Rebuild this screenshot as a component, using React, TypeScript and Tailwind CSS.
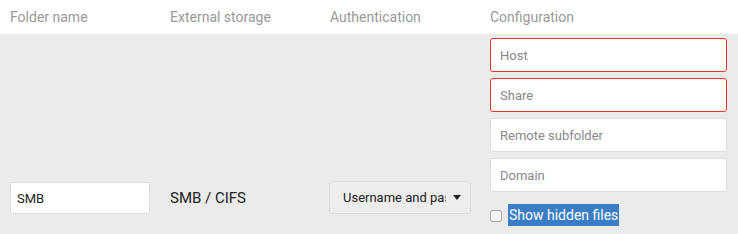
export default function App() {
  const configFields = [
    { label: "Host", invalid: true },
    { label: "Share", invalid: true },
    { label: "Remote subfolder", invalid: false },
    { label: "Domain", invalid: false },
  ]

  return (
    <div className="w-[738px] h-[234px] overflow-hidden bg-white font-['Roboto','Liberation_Sans',sans-serif]">
      {/* Header */}
      <div className="flex h-[34px] items-center text-[14px] text-[#999]">
        <div className="w-[160px] pl-[10px]">Folder name</div>
        <div className="w-[160px] pl-[10px]">External storage</div>
        <div className="w-[160px] pl-[10px]">Authentication</div>
        <div className="pl-[10px]">Configuration</div>
      </div>

      {/* Mount row */}
      <div className="flex h-[200px] bg-[#ebebeb]">
        <div className="flex w-[160px] items-end pb-[20px] pl-[10px]">
          <input
            defaultValue="SMB"
            className="h-[32px] w-[140px] rounded-[3px] border border-[#dbdbdb] bg-white px-[6px] text-[13px] text-[#222] outline-none"
          />
        </div>
        <div className="flex w-[160px] items-end pb-[20px] pl-[10px]">
          <span className="flex h-[32px] items-center text-[15px] text-[#222]">SMB / CIFS</span>
        </div>
        <div className="flex w-[160px] items-end pb-[20px] pl-[9px]">
          <div className="flex h-[33px] w-[142px] items-center rounded-[3px] border border-[#dbdbdb] bg-[#ededed] pl-[13px] pr-[9px]">
            <span className="w-[103px] overflow-hidden whitespace-nowrap text-[13px] text-[#222]">
              Username and password
            </span>
            <svg width="8" height="5" viewBox="0 0 8 5" className="ml-auto">
              <path d="M0 0h8L4 5z" fill="#222" />
            </svg>
          </div>
        </div>
        <div className="flex flex-col gap-[6px] pl-[10px] pt-[4px]">
          {configFields.map((f) => (
            <input
              key={f.label}
              placeholder={f.label}
              className={`h-[34px] w-[237px] rounded-[3px] border bg-white px-[9px] text-[13px] text-[#222] outline-none placeholder:text-[#888] ${
                f.invalid ? "border-[#e9322d]" : "border-[#dbdbdb]"
              }`}
            />
          ))}
          <label className="mt-[6px] flex items-center">
            <span className="mt-[1px] h-[12px] w-[12px] rounded-[2px] border border-[#aaa] bg-[#f2f2f2]" />
            <span className="ml-[6px] bg-[#3b7dc4] px-[1px] text-[14px] leading-[22px] text-white">
              Show hidden files
            </span>
          </label>
        </div>
      </div>
    </div>
  )
}
